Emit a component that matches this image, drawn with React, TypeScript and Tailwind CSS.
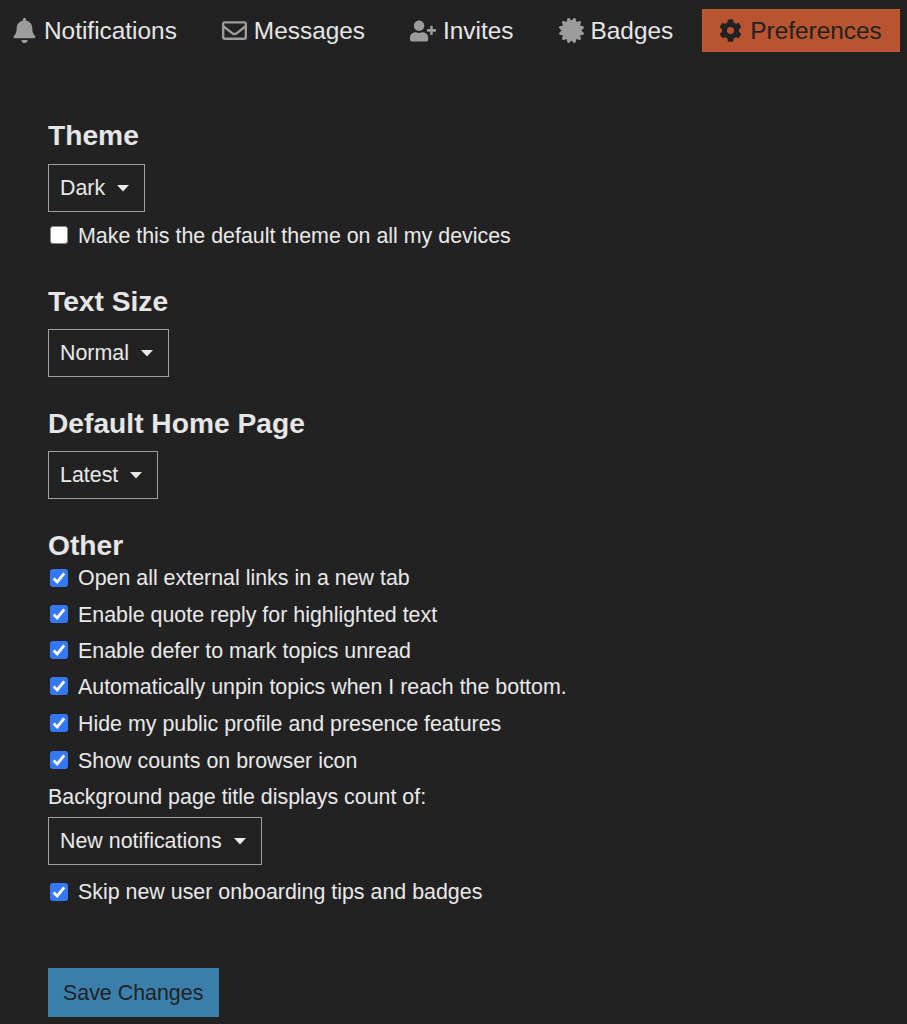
import { FaBell, FaRegEnvelope, FaUserPlus, FaCertificate, FaCog } from "react-icons/fa";
import { ReactNode } from "react";

const Tab = ({ icon, label, active, className }: { icon: ReactNode; label: string; active?: boolean; className?: string }) => (
  <a
    className={`flex h-[43px] items-center ${
      active ? "gap-[8px] bg-[#b85430] pl-[16px] pr-[17px] text-[#222222] border border-[#c25a34]" : "gap-[7px] text-[#e6e6e6]"
    } ${className ?? ""}`}
  >
    <span className={active ? "text-[#222222]" : "text-[#9c9c9c]"}>{icon}</span>
    <span>{label}</span>
  </a>
);

const Select = ({ label, className }: { label: string; className?: string }) => (
  <div className={`flex h-[48px] w-fit items-center gap-[11px] border border-[#a0a0a0] pl-[11px] pr-[14px] text-[#e9e9e9] ${className ?? ""}`}>
    <span>{label}</span>
    <svg width="14" height="8" viewBox="0 0 14 8">
      <path d="M1 1h12L7 7.4z" fill="#e9e9e9" />
    </svg>
  </div>
);

const Check = ({
  label,
  checked = true,
  className,
  labelClassName = "pt-[2px]",
}: {
  label: string;
  checked?: boolean;
  className?: string;
  labelClassName?: string;
}) => (
  <label className={`flex h-[24px] items-center gap-[10px] text-[#e9e9e9] ${className ?? ""}`}>
    <span
      className={`ml-[2px] flex h-[18px] w-[18px] shrink-0 items-center justify-center rounded-[3px] ${
        checked ? "bg-[#3478f6]" : "bg-white border border-[#8a8a8a]"
      }`}
    >
      {checked && (
        <svg width="16" height="16" viewBox="0 0 16 16">
          <path d="M2.6 8.4l3.6 3.6 7-8.6" fill="none" stroke="#fff" strokeWidth="2.8" />
        </svg>
      )}
    </span>
    <span className={labelClassName}>{label}</span>
  </label>
);

const Heading = ({ children, className }: { children: ReactNode; className?: string }) => (
  <h2 className={`text-[28.2px] font-bold leading-[32px] text-[#e6e6e6] ${className ?? ""}`}>{children}</h2>
);

export default function App() {
  return (
    <div className="min-h-[1024px] overflow-hidden bg-[#222222] text-[21.4px] leading-[26px] font-['Liberation_Sans',Arial,sans-serif]">
      <nav className="flex items-center pt-[9px] pl-[12px] text-[24.4px]">
        <Tab icon={<FaBell size={25} />} label="Notifications" />
        <Tab icon={<FaRegEnvelope size={25} />} label="Messages" className="ml-[45px]" />
        <Tab icon={<FaUserPlus size={26} />} label="Invites" className="ml-[45px]" />
        <Tab icon={<FaCertificate size={25} />} label="Badges" className="ml-[45px]" />
        <Tab icon={<FaCog size={23} />} label="Preferences" active className="ml-[29px]" />
      </nav>

      <main className="pl-[48px]">
        <Heading className="mt-[67px]">Theme</Heading>
        <Select label="Dark" className="mt-[13px]" />
        <Check label="Make this the default theme on all my devices" checked={false} className="mt-[11px]" />

        <Heading className="mt-[38px]">Text Size</Heading>
        <Select label="Normal" className="mt-[12px]" />

        <Heading className="mt-[30px]">Default Home Page</Heading>
        <Select label="Latest" className="mt-[12px]" />

        <Heading className="mt-[30px]">Other</Heading>
        <Check label="Open all external links in a new tab" className="mt-[5px]" labelClassName="" />
        <Check label="Enable quote reply for highlighted text" className="mt-[12px]" />
        <Check label="Enable defer to mark topics unread" className="mt-[12px]" />
        <Check label="Automatically unpin topics when I reach the bottom." className="mt-[12px]" />
        <Check label="Hide my public profile and presence features" className="mt-[13px]" />
        <Check label="Show counts on browser icon" className="mt-[13px]" />
        <p className="mt-[12px] text-[#e9e9e9]">Background page title displays count of:</p>
        <Select label="New notifications" className="mt-[7px]" />
        <Check label="Skip new user onboarding tips and badges" className="mt-[15px]" labelClassName="" />

        <button className="mt-[64px] flex h-[49px] w-[171px] items-center bg-[#3a7fac] pl-[15px] text-[#222222]">Save Changes</button>
      </main>
    </div>
  );
}
